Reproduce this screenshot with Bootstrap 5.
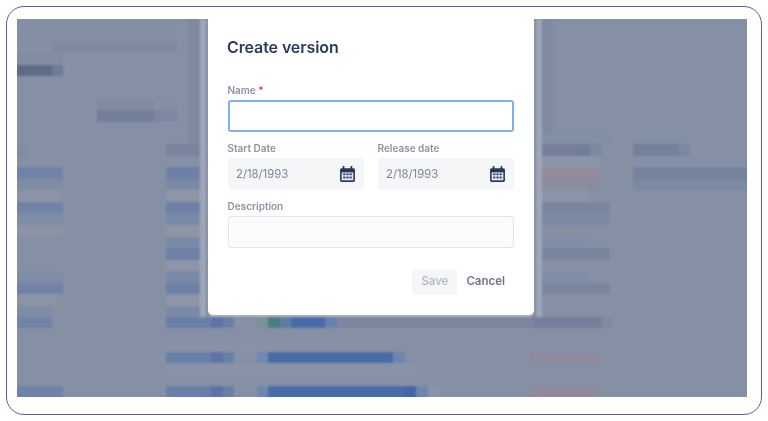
<!DOCTYPE html>
<html lang="en">
<head>
<meta charset="utf-8">
<title>Create version</title>
<link href="https://cdn.jsdelivr.net/npm/bootstrap@5.3.0/dist/css/bootstrap.min.css" rel="stylesheet">
<style>
html,body{background:#fff;height:100%;overflow:hidden}
body{font-family:Inter,"Liberation Sans",sans-serif}
.shot-frame{width:756px;height:409px;margin:6px 0 0 6px;padding:12px 14px 0 10px;border:1.5px solid #5d5c9f;border-radius:18px}
.shot-canvas{width:730px;height:378px;background:#8690a5}
.shot-canvas svg{display:block}
.dlg{left:191px;top:0;width:326px;height:296px;padding:0 20px;border-radius:0 0 5px 5px;box-shadow:0 2px 2px rgba(220,222,230,.45);filter:blur(.4px)}
.dlg-title{font-size:16px;font-weight:600;color:#2c3a5d;margin:19px 0 27px -1px;line-height:19px;letter-spacing:-.1px}
.fld-label{font-size:10px;font-weight:600;color:#8d93a4;line-height:12px;margin:0 0 4px -.5px;display:block}
.req{color:#cf4a30}
.fld-name{height:32px;border:2px solid #7fb0ea;border-radius:3px;background:#fff;box-shadow:none;margin-bottom:10px}
.fld-desc{height:32px;border:1.5px solid #e4e6ec;border-radius:3px;background:#fafbfd;box-shadow:none}
.fld-date{height:32px;background:#f5f6f8;border-radius:3px;padding:0 8px;margin-bottom:10px}
.fld-date input{border:0;background:transparent;padding:0;font-size:11.3px;color:#7d8498;width:90px;outline:0;font-family:inherit}
.fld-row{--bs-gutter-x:14px;margin-bottom:0}
.act-bar{margin-top:21px;padding-right:9px;gap:9px}
.btn.act-save,.btn.act-save:disabled{width:45px;height:26px;padding:0;font-size:11.5px;font-weight:500;color:#b0b5c3;background:#f5f6f8;border:0;border-radius:3px;opacity:1}
.act-cancel{height:26px;padding:0;font-size:11.5px;font-weight:600;color:#6c7489;background:transparent;border:0}
</style>
</head>
<body>
<div class="shot-frame">
  <div class="shot-canvas position-relative">
    <svg width="730" height="378" viewBox="17 19 730 378" shape-rendering="crispEdges" aria-hidden="true">
      <defs><filter id="soft" x="-2%" y="-2%" width="104%" height="104%"><feGaussianBlur stdDeviation="1"/></filter></defs>
      <g filter="url(#soft)">
      <rect x="10" y="10" width="745" height="395" fill="#8690a5"/>
      <!-- top-left header -->
      <rect x="17" y="30" width="160" height="12" fill="#848ea4"/>
      <rect x="52" y="42" width="125" height="11" fill="#7f899f"/>
      <rect x="17" y="53" width="46" height="12" fill="#828ca2"/>
      <rect x="10" y="65" width="42" height="11" fill="#5f6a88"/>
      <rect x="52" y="65" width="11" height="11" fill="#707b96"/>
      <rect x="63" y="99" width="12" height="11" fill="#8590a8"/>
      <rect x="97" y="99" width="57" height="11" fill="#808ba2"/>
      <rect x="154" y="99" width="23" height="11" fill="#848ea4"/>
      <rect x="63" y="110" width="12" height="12" fill="#8490a9"/>
      <rect x="97" y="110" width="57" height="12" fill="#737e99"/>
      <rect x="154" y="110" width="23" height="12" fill="#7d87a1"/>
      <!-- shadow strips beside the dialog -->
      <rect x="188" y="19" width="12" height="125" fill="#7f899f"/>
      <rect x="542" y="19" width="11" height="125" fill="#7f899f"/>
      <!-- first table header row -->
      <rect x="166" y="144" width="34" height="12" fill="#79839c"/>
      <rect x="534" y="133" width="76" height="11" fill="#838fa4"/>
      <rect x="633" y="133" width="57" height="11" fill="#8490a4"/>
      <rect x="534" y="144" width="56" height="12" fill="#747f9b"/>
      <rect x="578" y="144" width="12" height="12" fill="#6f7b98"/>
      <rect x="590" y="144" width="12" height="12" fill="#7c87a1"/>
      <rect x="633" y="144" width="46" height="12" fill="#74809a"/>
      <rect x="679" y="144" width="11" height="12" fill="#7c87a0"/>
      <rect x="10" y="144" width="18" height="12" fill="#818c9f"/>
      <!-- left column rows -->
      <g fill="#7083a6">
        <rect x="10" y="167" width="53" height="12"/><rect x="10" y="202" width="53" height="11"/>
        <rect x="10" y="283" width="53" height="11"/><rect x="10" y="317" width="42" height="11"/><rect x="10" y="386" width="53" height="18"/>
      </g>
      <g fill="#7f8ca6">
        <rect x="10" y="179" width="53" height="11"/><rect x="10" y="213" width="53" height="12"/>
        <rect x="10" y="271" width="53" height="12"/><rect x="10" y="306" width="42" height="11"/>
      </g>
      <g fill="#8c93a6"><rect x="10" y="190" width="53" height="12"/><rect x="10" y="225" width="53" height="11"/><rect x="10" y="294" width="47" height="12"/></g>
      <!-- second column rows -->
      <g fill="#6d80a8">
        <rect x="166" y="167" width="34" height="12"/><rect x="166" y="202" width="34" height="11"/><rect x="166" y="248" width="34" height="12"/>
        <rect x="166" y="283" width="34" height="11"/>
      </g>
      <g fill="#7a89a6">
        <rect x="166" y="179" width="34" height="11"/><rect x="166" y="213" width="34" height="12"/><rect x="166" y="237" width="34" height="11"/>
        <rect x="166" y="271" width="34" height="12"/><rect x="166" y="306" width="34" height="11"/>
      </g>
      <g fill="#8e95a6"><rect x="166" y="190" width="34" height="12"/><rect x="166" y="225" width="34" height="12"/><rect x="166" y="260" width="34" height="11"/><rect x="166" y="294" width="34" height="12"/></g>
      <rect x="200" y="19" width="6" height="298" fill="#a0a5b8"/>
      <rect x="206" y="19" width="2" height="298" fill="#7b85a0"/>
      <!-- right of dialog -->
      <rect x="536" y="19" width="6" height="298" fill="#a0a5b8"/>
      <rect x="534" y="19" width="2" height="298" fill="#7b85a0"/>
      <rect x="542" y="156" width="57" height="11" fill="#8a95a9"/>
      <rect x="542" y="167" width="57" height="12" fill="#938a9d"/>
      <rect x="542" y="179" width="57" height="11" fill="#8c8c9f"/>
      <rect x="542" y="190" width="46" height="12" fill="#8a95a9"/>
      <rect x="542" y="202" width="68" height="11" fill="#7a849f"/>
      <rect x="542" y="213" width="68" height="12" fill="#7d88a2"/>
      <rect x="542" y="237" width="46" height="11" fill="#828da6"/>
      <rect x="542" y="248" width="68" height="12" fill="#79849f"/>
      <rect x="542" y="271" width="46" height="12" fill="#818ca5"/>
      <rect x="542" y="283" width="68" height="11" fill="#79849f"/>
      <rect x="633" y="167" width="122" height="12" fill="#77829d"/>
      <rect x="633" y="179" width="122" height="11" fill="#7c89a3"/>
      <!-- bottom table rows -->
      <rect x="166" y="317" width="68" height="11" fill="#6880a8"/>
      <rect x="211" y="317" width="12" height="11" fill="#5f72a6"/>
      <rect x="257" y="317" width="11" height="11" fill="#79929a"/>
      <rect x="268" y="317" width="12" height="11" fill="#477f7f"/>
      <rect x="280" y="317" width="11" height="11" fill="#5f7da2"/>
      <rect x="291" y="317" width="34" height="11" fill="#4a6aa9"/>
      <rect x="325" y="317" width="12" height="11" fill="#6880ac"/>
      <rect x="337" y="317" width="197" height="11" fill="#7c86a0"/>
      <rect x="534" y="317" width="68" height="11" fill="#747e9a"/>
      <rect x="602" y="317" width="10" height="11" fill="#7f8aa1"/>
      <rect x="166" y="340" width="150" height="12" fill="#8792a7"/>
      <rect x="166" y="352" width="68" height="11" fill="#6880a8"/>
      <rect x="211" y="352" width="12" height="11" fill="#5f72a6"/>
      <rect x="257" y="352" width="11" height="11" fill="#7088b0"/>
      <rect x="268" y="352" width="125" height="11" fill="#476aa8"/>
      <rect x="393" y="352" width="12" height="11" fill="#6e85b0"/>
      <rect x="531" y="352" width="68" height="11" fill="#8f8a9c"/>
      <rect x="166" y="363" width="250" height="12" fill="#8893a8"/>
      <rect x="166" y="386" width="68" height="18" fill="#6880a8"/>
      <rect x="211" y="386" width="12" height="18" fill="#5f72a6"/>
      <rect x="257" y="386" width="11" height="18" fill="#7088b0"/>
      <rect x="268" y="386" width="137" height="18" fill="#476aa8"/>
      <rect x="405" y="386" width="11" height="18" fill="#4465a6"/>
      <rect x="416" y="386" width="12" height="18" fill="#6e85b0"/>
      <rect x="428" y="386" width="12" height="18" fill="#8a95a9"/>
      <rect x="531" y="386" width="68" height="18" fill="#8f8a9c"/>
      </g>
    </svg>
    <form class="dlg position-absolute bg-white">
      <h1 class="dlg-title">Create version</h1>
      <label class="fld-label" for="vName">Name <span class="req">*</span></label>
      <input id="vName" class="form-control fld-name" type="text">
      <div class="row fld-row">
        <div class="col-6">
          <label class="fld-label" for="vStart">Start Date</label>
          <div class="fld-date d-flex align-items-center justify-content-between">
            <input id="vStart" type="text" value="2/18/1993">
            <svg width="17" height="17" viewBox="0 0 16 16" aria-hidden="true"><rect x="3.5" y="0" width="1.6" height="3" fill="#27375a"/><rect x="10.9" y="0" width="1.6" height="3" fill="#27375a"/><rect x="1" y="2" width="14" height="13" rx="1.5" fill="#27375a"/><rect x="2.5" y="6" width="11" height="7.5" fill="#dfe3ea"/><g fill="#27375a"><rect x="4" y="7" width="2" height="1.6"/><rect x="7" y="7" width="2" height="1.6"/><rect x="10" y="7" width="2" height="1.6"/><rect x="4" y="10" width="2" height="1.6"/><rect x="7" y="10" width="2" height="1.6"/><rect x="10" y="10" width="2" height="1.6"/></g></svg>
          </div>
        </div>
        <div class="col-6">
          <label class="fld-label" for="vRelease">Release date</label>
          <div class="fld-date d-flex align-items-center justify-content-between">
            <input id="vRelease" type="text" value="2/18/1993">
            <svg width="17" height="17" viewBox="0 0 16 16" aria-hidden="true"><rect x="3.5" y="0" width="1.6" height="3" fill="#27375a"/><rect x="10.9" y="0" width="1.6" height="3" fill="#27375a"/><rect x="1" y="2" width="14" height="13" rx="1.5" fill="#27375a"/><rect x="2.5" y="6" width="11" height="7.5" fill="#dfe3ea"/><g fill="#27375a"><rect x="4" y="7" width="2" height="1.6"/><rect x="7" y="7" width="2" height="1.6"/><rect x="10" y="7" width="2" height="1.6"/><rect x="4" y="10" width="2" height="1.6"/><rect x="7" y="10" width="2" height="1.6"/><rect x="10" y="10" width="2" height="1.6"/></g></svg>
          </div>
        </div>
      </div>
      <label class="fld-label" for="vDesc">Description</label>
      <input id="vDesc" class="form-control fld-desc" type="text">
      <div class="act-bar d-flex justify-content-end align-items-center">
        <button type="button" class="btn act-save" disabled>Save</button>
        <button type="button" class="btn act-cancel">Cancel</button>
      </div>
    </form>
  </div>
</div>
<script src="https://cdn.jsdelivr.net/npm/bootstrap@5.3.0/dist/js/bootstrap.bundle.min.js"></script>
</body>
</html>
